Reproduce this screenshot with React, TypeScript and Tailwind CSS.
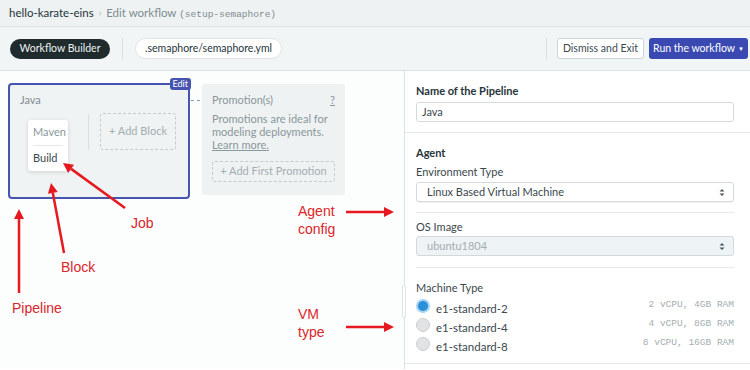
import React from "react";

const sans = { fontFamily: 'Lato, "Noto Sans", sans-serif' };

function Header() {
  return (
    <div className="flex h-[27px] items-center gap-[5px] border-b border-[#dde3e5] bg-[#eef2f3] px-[9px] text-[11.5px]">
      <span className="text-[#26353a]">hello-karate-eins</span>
      <span className="text-[9px] text-[#9aa6a9]">›</span>
      <span className="text-[#7f8c90]">
        Edit workflow{" "}
        <span className="font-['Liberation_Mono',monospace] text-[9.5px]">(setup-semaphore)</span>
      </span>
    </div>
  );
}

function Toolbar() {
  return (
    <div className="flex h-[44px] items-center border-b border-[#dde3e5] bg-[#f1f5f6] pl-[10px] pr-[2px] text-[10.5px]">
      <div className="flex h-[20px] w-[100px] items-center justify-center rounded-full bg-[#1f2b2d] text-[#eef2f3]">
        Workflow Builder
      </div>
      <div className="mx-[12px] h-[22px] w-px bg-[#dae0e2]" />
      <div className="flex h-[21px] w-[147px] items-center justify-center rounded-full border border-[#dfe5e7] bg-white text-[#26353a]">
        .semaphore/semaphore.yml
      </div>
      <div className="flex-1" />
      <div className="mr-[10px] h-[22px] w-px bg-[#dae0e2]" />
      <div className="flex h-[21px] w-[87px] items-center justify-center rounded-[3px] border border-[#cdd5d8] bg-white text-[#3b4a4f]">
        Dismiss and Exit
      </div>
      <div className="ml-[5px] flex h-[21px] w-[99px] items-center justify-center gap-[3px] rounded-[3px] bg-[#3a49b1] text-white">
        Run the workflow <span className="text-[6px]">▼</span>
      </div>
    </div>
  );
}

function PipelineBox() {
  return (
    <div className="relative h-[116px] w-[182px] rounded-[4px] border-2 border-[#4653b0] bg-[#eff3f4] px-[10px] pt-[8px]">
      <div className="absolute -top-[7px] right-[-3px] rounded-[3px] bg-[#4653b0] px-[3px] text-[9px] leading-[12px] text-white">
        Edit
      </div>
      <div className="absolute right-[-12px] top-[15px] w-[9px] border-t border-dashed border-[#8c989c]" />
      <div className="text-[11px] leading-[14px] text-[#7f8c90]">Java</div>
      <div className="mt-[6px] flex items-start">
        <div className="ml-[8px] mt-[7px] flex h-[51px] w-[40px] flex-col rounded-[3px] bg-white px-[5px] pt-[5px] text-[11px] shadow-[0_1px_4px_rgba(0,0,0,0.15)]">
          <div className="leading-[14px] text-[#8a979b]">Maven</div>
          <div className="my-[6px] h-px bg-[#e3e8ea]" />
          <div className="leading-[12px] text-[#3a484d]">Build</div>
        </div>
        <div className="ml-[20px] mt-px h-[36px] w-px bg-[#dbe1e3]" />
        <div className="ml-[11px] flex h-[37px] w-[76px] items-center justify-center rounded-[3px] border border-dashed border-[#c3cbce] text-[11px] text-[#a4aeb1]">
          + Add Block
        </div>
      </div>
    </div>
  );
}

function Promotions() {
  return (
    <div className="mt-px h-[111px] w-[143px] rounded-[3px] bg-[#eef2f3] px-[10px] pt-[9px] text-[11px] text-[#8a979b]">
      <div className="flex justify-between leading-[14px]">
        <span>Promotion(s)</span>
        <span className="underline">?</span>
      </div>
      <div className="mt-[5px] leading-[13px]">
        Promotions are ideal for
        <br />
        modeling deployments.
        <br />
        <span className="underline">Learn more.</span>
      </div>
      <div className="mt-[10px] flex h-[21px] items-center justify-center rounded-[3px] border border-dashed border-[#c3cbce] text-[#a4aeb1]">
        + Add First Promotion
      </div>
    </div>
  );
}

function Chevrons() {
  return (
    <svg width="6" height="9" viewBox="0 0 6 9" className="shrink-0">
      <path d="M0.5 3.5 L3 1 L5.5 3.5 Z M0.5 5.5 L3 8 L5.5 5.5 Z" fill="#4a585c" />
    </svg>
  );
}

function Radio({ on, label, spec }: { on?: boolean; label: string; spec: string }) {
  return (
    <div className="flex h-[19px] items-center">
      {on ? (
        <div className="flex h-[14px] w-[14px] items-center justify-center rounded-full bg-[#a6d3f3]">
          <div className="h-[10px] w-[10px] rounded-full bg-[#2a8fd8]" />
        </div>
      ) : (
        <div className="h-[14px] w-[14px] rounded-full border border-[#c9cfd1] bg-[#e2e4e4]" />
      )}
      <span className="ml-[6px] mt-[7px] text-[11.5px] text-[#3a484d]">{label}</span>
      <span className="ml-auto font-['Liberation_Mono',monospace] text-[9.5px] text-[#a4aeb1]">{spec}</span>
    </div>
  );
}

function Settings() {
  return (
    <div className="relative w-[346px] border-l border-[#dde3e5] bg-white text-[#26353a]">
      <div className="absolute left-[-3px] top-[214px] h-[33px] w-[4px] rounded-[2px] border border-[#dfe4e6] bg-white" />
      <div className="border-b border-[#e4e9ea] pb-[10px] pl-[11px] pr-[16px] pt-[13px]">
        <div className="text-[11px] font-bold leading-[14px]">Name of the Pipeline</div>
        <div className="mt-[4px] flex h-[20px] items-center rounded-[3px] border border-[#d3d9db] px-[5px] text-[11px] text-[#3a484d]">
          Java
        </div>
      </div>
      <div className="pl-[11px] pr-[16px] pt-[13px] text-[11px]">
        <div className="font-bold leading-[14px]">Agent</div>
        <div className="mt-[5px] leading-[14px] text-[#3a484d]">Environment Type</div>
        <div className="mt-[3px] flex h-[20px] items-center justify-between rounded-[3px] border border-[#d3d9db] pl-[10px] pr-[8px] text-[#3a484d] shadow-[0_1px_1px_rgba(0,0,0,0.05)]">
          Linux Based Virtual Machine
          <Chevrons />
        </div>
        <div className="mt-[10px] border-t border-[#e4e9ea] pt-[7px] leading-[14px] text-[#3a484d]">OS Image</div>
        <div className="mt-[2px] flex h-[20px] items-center justify-between rounded-[3px] border border-[#d3d9db] bg-[#eef3f5] pl-[10px] pr-[8px] text-[#a4aeb1]">
          ubuntu1804
          <Chevrons />
        </div>
        <div className="mt-[11px] border-t border-[#e4e9ea] pt-[13px] leading-[14px] text-[#3a484d]">Machine Type</div>
        <div className="mt-px flex flex-col">
          <Radio on label="e1-standard-2" spec="2 vCPU, 4GB RAM" />
          <Radio label="e1-standard-4" spec="4 vCPU, 8GB RAM" />
          <Radio label="e1-standard-8" spec="8 vCPU, 16GB RAM" />
        </div>
      </div>
      <div className="mt-[10px] border-t border-[#e4e9ea]" />
    </div>
  );
}

function Annotations() {
  const red = "#e5191f";
  const arrow = (x1: number, y1: number, x2: number, y2: number, key: string) => {
    const a = Math.atan2(y2 - y1, x2 - x1);
    const l = 10;
    const w = 5;
    const bx = x2 - l * Math.cos(a);
    const by = y2 - l * Math.sin(a);
    const p1 = `${bx + w * Math.sin(a)},${by - w * Math.cos(a)}`;
    const p2 = `${bx - w * Math.sin(a)},${by + w * Math.cos(a)}`;
    return (
      <g key={key}>
        <line x1={x1} y1={y1} x2={bx} y2={by} stroke={red} strokeWidth="2.5" />
        <polygon points={`${x2},${y2} ${p1} ${p2}`} fill={red} />
      </g>
    );
  };
  return (
    <div className="pointer-events-none absolute inset-0 font-['Liberation_Sans',Arial,sans-serif] text-[14px] leading-[18px] text-[#d9262a]">
      <svg width="750" height="370" className="absolute left-0 top-0">
        {arrow(125, 208, 63, 163, "job")}
        {arrow(64, 253, 51, 183, "block")}
        {arrow(19, 293, 19, 209, "pipe")}
        {arrow(346, 212, 394, 212, "agent")}
        {arrow(346, 327, 394, 327, "vm")}
      </svg>
      <div className="absolute left-[131px] top-[214px]">Job</div>
      <div className="absolute left-[61px] top-[258px]">Block</div>
      <div className="absolute left-[12px] top-[299px]">Pipeline</div>
      <div className="absolute left-[298px] top-[202px]">
        Agent
        <br />
        config
      </div>
      <div className="absolute left-[298px] top-[305px]">
        VM
        <br />
        type
      </div>
    </div>
  );
}

export default function App() {
  return (
    <div className="relative h-[370px] w-[750px] overflow-hidden bg-white" style={sans}>
      <Header />
      <Toolbar />
      <div className="flex h-[298px]">
        <div className="flex flex-1 items-start gap-[12px] bg-[#fcfdfd] pl-[8px] pt-[12px]">
          <PipelineBox />
          <Promotions />
        </div>
        <Settings />
      </div>
      <Annotations />
    </div>
  );
}
